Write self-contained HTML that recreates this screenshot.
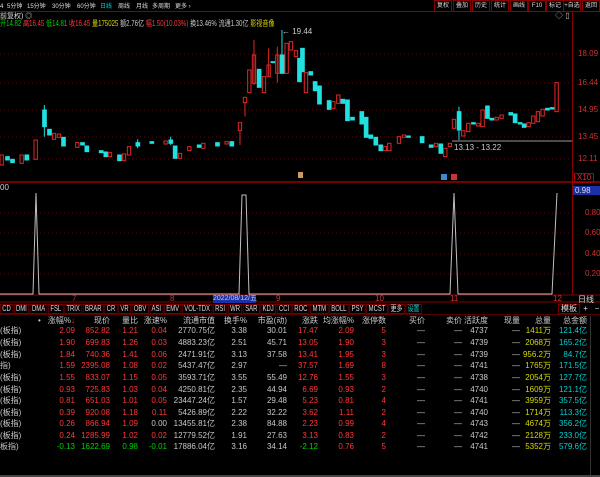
<!DOCTYPE html><html><head><meta charset="utf-8"><style>
*{margin:0;padding:0;box-sizing:border-box}
body{width:600px;height:477px;background:#000;overflow:hidden;position:relative;font-family:"Liberation Sans","Noto Sans CJK SC",sans-serif;font-size:8px;color:#c8c8c8}
.a{position:absolute;white-space:nowrap;line-height:10px}
.t{font-size:6px;color:#ddd;top:2px}
.r{color:#ff3838}.g{color:#00d000}.y{color:#d8d800}.c{color:#00d0d0}.w{color:#c8c8c8}
.tb{position:absolute;top:0;height:12px;width:18px;border:1px solid #800;color:#ddd;font-size:6px;line-height:10px;text-align:center;overflow:hidden}
.tab{display:inline-block;border:1px solid #700;padding:0 2px;margin-right:1px;height:10px;line-height:8px}
.row{position:absolute;left:0;width:600px;height:12px}
.row span{position:absolute;text-align:right;line-height:12px}
</style></head><body>
<div class="a t" style="left:0">4</div>
<div class="a t" style="left:7px">5分钟</div>
<div class="a t" style="left:27px">15分钟</div>
<div class="a t" style="left:52px">30分钟</div>
<div class="a t" style="left:77px">60分钟</div>
<div class="a t" style="left:100px;color:#00d0d0">日线</div>
<div class="a t" style="left:118px">周线</div>
<div class="a t" style="left:136px">月线</div>
<div class="a t" style="left:152px">多周期</div>
<div class="a t" style="left:175px">更多 ›</div>
<div class="tb" style="left:434px">复权</div><div class="tb" style="left:453px">叠加</div><div class="tb" style="left:472px">历史</div><div class="tb" style="left:491px">统计</div><div class="tb" style="left:510px">画线</div><div class="tb" style="left:528px">F10</div><div class="tb" style="left:546px">标记</div><div class="tb" style="left:563px">+自选</div><div class="tb" style="left:582px">返回</div>
<div style="position:absolute;left:0;top:11px;width:600px;height:1px;background:#800"></div>
<div class="a" style="left:0;top:12px;color:#ddd;font-size:7px">前复权) ◎</div>
<div class="a" style="left:555px;top:11px;color:#bbb">◇ ▯</div>
<div class="a" style="left:0;top:19px;transform:scaleX(0.76);transform-origin:0 0"><span class="g">开14.82</span> <span class="r">高16.45</span> <span class="g">低14.81</span> <span class="r">收16.45</span> <span class="y">量175025</span> <span class="w">额2.76亿</span> <span class="r">幅1.50(10.03%)</span> <span class="w">换13.46% 流通1.30亿</span> <span class="y">影视音像</span></div>
<div style="position:absolute;left:572px;top:11px;width:1px;height:283px;background:#800"></div>
<svg width="600" height="477" style="position:absolute;left:0;top:0">
<g stroke="#600" stroke-dasharray="1,3" stroke-width="1">
<line x1="0" y1="54" x2="572" y2="54"/><line x1="0" y1="83" x2="572" y2="83"/><line x1="0" y1="110" x2="572" y2="110"/><line x1="0" y1="137" x2="572" y2="137"/><line x1="0" y1="159" x2="572" y2="159"/>
<line x1="0" y1="213" x2="572" y2="213"/><line x1="0" y1="233" x2="572" y2="233"/><line x1="0" y1="254" x2="572" y2="254"/><line x1="0" y1="274" x2="572" y2="274"/>
</g>
<line x1="0" y1="182" x2="600" y2="182" stroke="#900" stroke-width="1.5"/>
<line x1="0" y1="295" x2="600" y2="295" stroke="#800"/>
<line x1="0" y1="302" x2="600" y2="302" stroke="#800"/>
<line x1="452" y1="141" x2="572" y2="141" stroke="#999"/>
<g transform="translate(0,30) scale(0.3333)" stroke-width="3">
<g fill="#20e0e0" stroke="#20e0e0">
<rect x="17" y="380" width="11" height="10"/><rect x="32" y="388" width="11" height="10"/><rect x="75" y="375" width="11" height="15"/><rect x="128" y="240" width="11" height="50"/><line x1="133" y1="225" x2="133" y2="320"/><rect x="143" y="298" width="11" height="17"/><rect x="185" y="322" width="11" height="26"/><rect x="242" y="338" width="11" height="7"/><rect x="255" y="348" width="11" height="17"/><rect x="298" y="362" width="11" height="6"/><rect x="312" y="366" width="11" height="14"/><rect x="353" y="375" width="11" height="17"/><rect x="408" y="338" width="11" height="10"/><line x1="413" y1="328" x2="413" y2="355"/><rect x="450" y="335" width="11" height="5"/><rect x="507" y="330" width="11" height="10"/><line x1="512" y1="320" x2="512" y2="345"/><rect x="520" y="348" width="11" height="37"/><rect x="592" y="345" width="11" height="7"/><rect x="647" y="338" width="11" height="10"/><rect x="690" y="335" width="11" height="13"/><rect x="772" y="118" width="11" height="54"/><rect x="813" y="95" width="11" height="3"/><rect x="841" y="75" width="11" height="55"/><line x1="846" y1="0" x2="846" y2="130"/><rect x="893" y="85" width="11" height="70"/>
<rect x="902" y="55" width="11" height="70"/><rect x="927" y="125" width="11" height="10"/><rect x="940" y="155" width="11" height="27"/><rect x="953" y="168" width="11" height="54"/><rect x="982" y="212" width="11" height="26"/><rect x="1023" y="208" width="11" height="12"/><rect x="1037" y="210" width="11" height="62"/><rect x="1052" y="262" width="11" height="8"/><rect x="1080" y="245" width="11" height="37"/><rect x="1093" y="262" width="11" height="60"/><rect x="1107" y="315" width="11" height="10"/><rect x="1122" y="322" width="11" height="23"/><rect x="1137" y="345" width="11" height="17"/><rect x="1220" y="318" width="11" height="4"/><rect x="1261" y="320" width="11" height="18"/><rect x="1288" y="345" width="11" height="7"/><rect x="1317" y="342" width="11" height="28"/><rect x="1372" y="245" width="11" height="55"/><line x1="1377" y1="230" x2="1377" y2="330"/><rect x="1415" y="278" width="11" height="4"/><rect x="1457" y="228" width="11" height="37"/><rect x="1470" y="265" width="11" height="5"/><rect x="1527" y="248" width="11" height="7"/><rect x="1540" y="252" width="11" height="26"/><rect x="1555" y="278" width="11" height="4"/><rect x="1567" y="282" width="11" height="10"/><rect x="1637" y="235" width="11" height="5"/><rect x="1651" y="233" width="11" height="4"/>
</g>
<g fill="none" stroke="#e02828">
<rect x="0" y="375" width="10" height="30"/><rect x="60" y="375" width="10" height="25"/><rect x="102" y="330" width="10" height="58"/><rect x="157" y="310" width="10" height="18"/><rect x="172" y="312" width="10" height="10"/><rect x="227" y="338" width="10" height="14"/><rect x="325" y="368" width="10" height="12"/><rect x="367" y="372" width="10" height="20"/><rect x="382" y="350" width="10" height="25"/><rect x="492" y="333" width="10" height="9"/><rect x="535" y="370" width="10" height="15"/><rect x="563" y="350" width="10" height="12"/><rect x="605" y="340" width="10" height="15"/><rect x="675" y="335" width="10" height="7"/><rect x="715" y="278" width="10" height="24"/><line x1="720" y1="302" x2="720" y2="345"/><rect x="730" y="202" width="10" height="16"/><line x1="735" y1="218" x2="735" y2="260"/><rect x="743" y="120" width="10" height="68"/><rect x="757" y="75" width="10" height="85"/><line x1="762" y1="30" x2="762" y2="165"/><rect x="787" y="140" width="10" height="48"/><rect x="801" y="105" width="10" height="35"/><line x1="806" y1="55" x2="806" y2="140"/><rect x="827" y="75" width="10" height="55"/><line x1="832" y1="50" x2="832" y2="158"/><rect x="855" y="40" width="10" height="90"/><rect x="868" y="35" width="10" height="25"/><rect x="883" y="62" width="10" height="18"/>
</g>
<g fill="none" stroke="#e02828" transform="translate(900,0)"><rect x="13" y="128" width="10" height="60"/><rect x="95" y="215" width="10" height="20"/><rect x="110" y="195" width="10" height="25"/><rect x="250" y="350" width="10" height="12"/><rect x="263" y="340" width="10" height="22"/><rect x="292" y="320" width="10" height="20"/><rect x="307" y="315" width="10" height="7"/><rect x="403" y="340" width="10" height="10"/><rect x="431" y="355" width="10" height="25"/><rect x="445" y="340" width="10" height="10"/><rect x="457" y="268" width="10" height="27"/><rect x="485" y="302" width="10" height="16"/><rect x="500" y="280" width="10" height="25"/><rect x="530" y="280" width="10" height="8"/><rect x="543" y="240" width="10" height="50"/><rect x="585" y="262" width="10" height="8"/><rect x="600" y="255" width="10" height="10"/><rect x="681" y="278" width="10" height="12"/><rect x="695" y="258" width="10" height="22"/><rect x="709" y="245" width="10" height="30"/><rect x="723" y="238" width="10" height="20"/><rect x="765" y="158" width="10" height="87"/></g>
</g>
<polyline fill="none" stroke="#c0c0c0" stroke-width="1" points="0,294 33,294 36,193 39,294 239,294 242,195 246,195 249,294 450,294 454,193 458,294 552,294 557,193"/>
</svg>
<div class="a" style="left:282px;top:27px;color:#ccc">← 19.44</div>
<div class="a" style="left:454px;top:143px;color:#ccc">13.13 - 13.22</div>
<div class="a" style="left:578px;top:49px;color:#d03030">18.09</div>
<div class="a" style="left:578px;top:78px;color:#d03030">16.44</div>
<div class="a" style="left:578px;top:105px;color:#d03030">14.95</div>
<div class="a" style="left:578px;top:132px;color:#d03030">13.45</div>
<div class="a" style="left:578px;top:154px;color:#d03030">12.11</div>
<div class="a" style="left:574px;top:173px;color:#d03030;border:1px solid #a00;padding:0 2px;line-height:8px">X10</div>
<div class="a" style="left:298px;top:172px;width:5px;height:6px;background:#c96"></div>
<div class="a" style="left:441px;top:174px;width:6px;height:6px;background:#48c"></div>
<div class="a" style="left:451px;top:174px;width:6px;height:6px;background:#c33"></div>
<div class="a" style="left:0;top:183px;color:#ccc">00</div>
<div class="a" style="left:573px;top:186px;width:27px;height:9px;background:#1a2fa8;color:#ddd;line-height:9px;padding-left:2px">0.98</div>
<div class="a" style="left:585px;top:208px;color:#d03030">0.80</div>
<div class="a" style="left:585px;top:228px;color:#d03030">0.60</div>
<div class="a" style="left:585px;top:249px;color:#d03030">0.40</div>
<div class="a" style="left:585px;top:269px;color:#d03030">0.20</div>
<div class="a" style="left:72px;top:295px;color:#d03030;line-height:7px">7</div>
<div class="a" style="left:170px;top:295px;color:#d03030;line-height:7px">8</div>
<div class="a" style="left:213px;top:295px;width:43px;height:8px;background:#1a2fa8;color:#ccc;line-height:8px;font-size:7px">2022/08/12/五</div>
<div class="a" style="left:276px;top:295px;color:#d03030;line-height:7px">9</div>
<div class="a" style="left:375px;top:295px;color:#d03030;line-height:7px">10</div>
<div class="a" style="left:450px;top:295px;color:#d03030;line-height:7px">11</div>
<div class="a" style="left:553px;top:295px;color:#d03030;line-height:7px">12</div>
<div class="a" style="left:578px;top:295px;color:#ddd">日线</div>
<div class="a" style="left:0;top:304px;color:#ddd;transform:scaleX(0.74);transform-origin:0 0"><span class="tab">CD</span><span class="tab">DMI</span><span class="tab">DMA</span><span class="tab">FSL</span><span class="tab">TRIX</span><span class="tab">BRAR</span><span class="tab">CR</span><span class="tab">VR</span><span class="tab">OBV</span><span class="tab">ASI</span><span class="tab">EMV</span><span class="tab">VOL-TDX</span><span class="tab">RSI</span><span class="tab">WR</span><span class="tab">SAR</span><span class="tab">KDJ</span><span class="tab">CCI</span><span class="tab">ROC</span><span class="tab">MTM</span><span class="tab">BOLL</span><span class="tab">PSY</span><span class="tab">MCST</span><span class="tab">更多</span><span class="tab c">设置</span></div>
<div class="a" style="left:558px;top:304px;color:#ddd"><span class="tab">模板</span> + &nbsp; −</div>
<div style="position:absolute;left:0;top:314px;width:600px;height:1px;background:#500"></div>
<div class="row" style="top:315px;color:#ccc">
<span style="left:38px">•</span><span style="right:525px">涨幅%<b class="r">↓</b></span><span style="right:490px">现价</span><span style="right:462px">量比</span><span style="right:433px">涨速%</span><span style="right:385px">流通市值</span><span style="right:353px">换手%</span><span style="right:313px">市盈(动)</span><span style="right:282px">涨跌</span><span style="right:246px">均涨幅%</span><span style="right:214px">涨停数</span><span style="right:175px">买价</span><span style="right:138px">卖价</span><span style="right:112px">活跃度</span><span style="right:80px">现量</span><span style="right:49px">总量</span><span style="right:13px">总金额</span></div>
<div class="row" style="top:325px"><span style="left:0" class="w">(板指)</span><span class="r" style="right:525px">2.09</span><span class="r" style="right:490px">852.82</span><span class="r" style="right:462px">1.21</span><span class="r" style="right:433px">0.04</span><span style="right:385px">2770.75亿</span><span style="right:353px">3.38</span><span style="right:313px">30.01</span><span class="r" style="right:282px">17.47</span><span class="r" style="right:246px">2.09</span><span class="r" style="right:214px">5</span><span style="right:175px">—</span><span style="right:138px">—</span><span style="right:112px">4737</span><span style="right:80px">—</span><span class="y" style="right:49px">1411万</span><span class="c" style="right:13px">121.4亿</span></div>
<div class="row" style="top:337px"><span style="left:0" class="w">(板指)</span><span class="r" style="right:525px">1.90</span><span class="r" style="right:490px">699.83</span><span class="r" style="right:462px">1.26</span><span class="r" style="right:433px">0.03</span><span style="right:385px">4883.23亿</span><span style="right:353px">2.51</span><span style="right:313px">45.71</span><span class="r" style="right:282px">13.05</span><span class="r" style="right:246px">1.90</span><span class="r" style="right:214px">3</span><span style="right:175px">—</span><span style="right:138px">—</span><span style="right:112px">4739</span><span style="right:80px">—</span><span class="y" style="right:49px">2068万</span><span class="c" style="right:13px">165.2亿</span></div>
<div class="row" style="top:349px"><span style="left:0" class="w">(板指)</span><span class="r" style="right:525px">1.84</span><span class="r" style="right:490px">740.36</span><span class="r" style="right:462px">1.41</span><span class="r" style="right:433px">0.06</span><span style="right:385px">2471.91亿</span><span style="right:353px">3.13</span><span style="right:313px">37.58</span><span class="r" style="right:282px">13.41</span><span class="r" style="right:246px">1.95</span><span class="r" style="right:214px">3</span><span style="right:175px">—</span><span style="right:138px">—</span><span style="right:112px">4739</span><span style="right:80px">—</span><span class="y" style="right:49px">956.2万</span><span class="c" style="right:13px">84.7亿</span></div>
<div class="row" style="top:360px"><span style="left:0" class="w">指)</span><span class="r" style="right:525px">1.59</span><span class="r" style="right:490px">2395.08</span><span class="r" style="right:462px">1.08</span><span class="r" style="right:433px">0.02</span><span style="right:385px">5437.47亿</span><span style="right:353px">2.97</span><span style="right:313px">—</span><span class="r" style="right:282px">37.57</span><span class="r" style="right:246px">1.69</span><span class="r" style="right:214px">8</span><span style="right:175px">—</span><span style="right:138px">—</span><span style="right:112px">4741</span><span style="right:80px">—</span><span class="y" style="right:49px">1765万</span><span class="c" style="right:13px">171.5亿</span></div>
<div class="row" style="top:372px"><span style="left:0" class="w">(板指)</span><span class="r" style="right:525px">1.55</span><span class="r" style="right:490px">833.07</span><span class="r" style="right:462px">1.15</span><span class="r" style="right:433px">0.05</span><span style="right:385px">3593.71亿</span><span style="right:353px">3.55</span><span style="right:313px">55.49</span><span class="r" style="right:282px">12.76</span><span class="r" style="right:246px">1.55</span><span class="r" style="right:214px">3</span><span style="right:175px">—</span><span style="right:138px">—</span><span style="right:112px">4738</span><span style="right:80px">—</span><span class="y" style="right:49px">2054万</span><span class="c" style="right:13px">127.7亿</span></div>
<div class="row" style="top:384px"><span style="left:0" class="w">(板指)</span><span class="r" style="right:525px">0.93</span><span class="r" style="right:490px">725.83</span><span class="r" style="right:462px">1.03</span><span class="r" style="right:433px">0.04</span><span style="right:385px">4250.81亿</span><span style="right:353px">2.35</span><span style="right:313px">44.94</span><span class="r" style="right:282px">6.69</span><span class="r" style="right:246px">0.93</span><span class="r" style="right:214px">2</span><span style="right:175px">—</span><span style="right:138px">—</span><span style="right:112px">4740</span><span style="right:80px">—</span><span class="y" style="right:49px">1609万</span><span class="c" style="right:13px">121.1亿</span></div>
<div class="row" style="top:395px"><span style="left:0" class="w">(板指)</span><span class="r" style="right:525px">0.81</span><span class="r" style="right:490px">651.03</span><span class="r" style="right:462px">1.01</span><span class="r" style="right:433px">0.05</span><span style="right:385px">23447.24亿</span><span style="right:353px">1.57</span><span style="right:313px">29.48</span><span class="r" style="right:282px">5.23</span><span class="r" style="right:246px">0.81</span><span class="r" style="right:214px">4</span><span style="right:175px">—</span><span style="right:138px">—</span><span style="right:112px">4741</span><span style="right:80px">—</span><span class="y" style="right:49px">3959万</span><span class="c" style="right:13px">357.5亿</span></div>
<div class="row" style="top:407px"><span style="left:0" class="w">(板指)</span><span class="r" style="right:525px">0.39</span><span class="r" style="right:490px">920.08</span><span class="r" style="right:462px">1.18</span><span class="r" style="right:433px">0.11</span><span style="right:385px">5426.89亿</span><span style="right:353px">2.22</span><span style="right:313px">32.22</span><span class="r" style="right:282px">3.62</span><span class="r" style="right:246px">1.11</span><span class="r" style="right:214px">2</span><span style="right:175px">—</span><span style="right:138px">—</span><span style="right:112px">4740</span><span style="right:80px">—</span><span class="y" style="right:49px">1714万</span><span class="c" style="right:13px">113.3亿</span></div>
<div class="row" style="top:418px"><span style="left:0" class="w">(板指)</span><span class="r" style="right:525px">0.26</span><span class="r" style="right:490px">866.94</span><span class="r" style="right:462px">1.09</span><span style="right:433px">0.00</span><span style="right:385px">13455.81亿</span><span style="right:353px">2.38</span><span style="right:313px">84.88</span><span class="r" style="right:282px">2.23</span><span class="r" style="right:246px">0.99</span><span class="r" style="right:214px">4</span><span style="right:175px">—</span><span style="right:138px">—</span><span style="right:112px">4743</span><span style="right:80px">—</span><span class="y" style="right:49px">4674万</span><span class="c" style="right:13px">356.2亿</span></div>
<div class="row" style="top:430px"><span style="left:0" class="w">(板指)</span><span class="r" style="right:525px">0.24</span><span class="r" style="right:490px">1285.99</span><span class="r" style="right:462px">1.02</span><span class="r" style="right:433px">0.02</span><span style="right:385px">12779.52亿</span><span style="right:353px">1.91</span><span style="right:313px">27.63</span><span class="r" style="right:282px">3.13</span><span class="r" style="right:246px">0.83</span><span class="r" style="right:214px">2</span><span style="right:175px">—</span><span style="right:138px">—</span><span style="right:112px">4742</span><span style="right:80px">—</span><span class="y" style="right:49px">2128万</span><span class="c" style="right:13px">233.0亿</span></div>
<div class="row" style="top:441px"><span style="left:0" class="w">板指)</span><span class="g" style="right:525px">-0.13</span><span class="g" style="right:490px">1622.69</span><span class="g" style="right:462px">0.98</span><span class="g" style="right:433px">-0.01</span><span style="right:385px">17886.04亿</span><span style="right:353px">3.16</span><span style="right:313px">34.14</span><span class="g" style="right:282px">-2.12</span><span class="r" style="right:246px">0.76</span><span class="r" style="right:214px">5</span><span style="right:175px">—</span><span style="right:138px">—</span><span style="right:112px">4741</span><span style="right:80px">—</span><span class="y" style="right:49px">5352万</span><span class="c" style="right:13px">579.6亿</span></div>
<div style="position:absolute;left:590px;top:316px;width:8px;height:160px;border-left:1px solid #333"></div>
<div style="position:absolute;left:0;top:475px;width:600px;height:2px;background:#444"></div>
</body></html>
